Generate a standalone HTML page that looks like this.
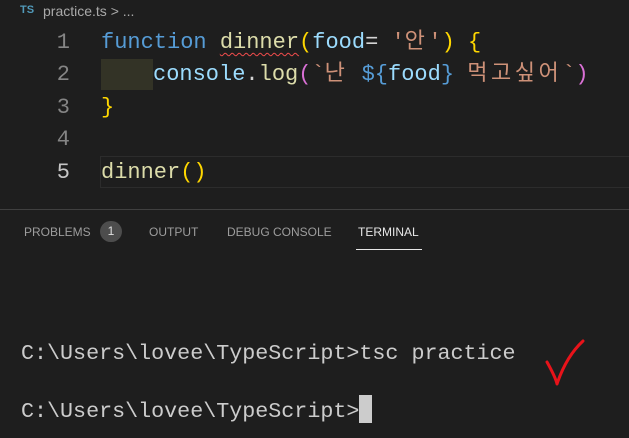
<!DOCTYPE html>
<html><head><meta charset="utf-8"><style>
body{margin:0;width:629px;height:438px;background:#1e1e1e;overflow:hidden;position:relative;font-family:"Liberation Sans",sans-serif}
.ab{position:absolute;white-space:pre}
.code{font-family:"Liberation Mono","Noto Sans CJK KR",monospace;font-size:22px;line-height:32px}
.k{letter-spacing:3.5px}
.ln{color:#858585;width:70px;text-align:right}
.kw{color:#569cd6}.fn{color:#dcdcaa}.pa{color:#9cdcfe}.st{color:#ce9178}.y{color:#ffd700}.p{color:#da70d6}.w{color:#d4d4d4}
.tab{font-size:12px;color:#9d9d9d;top:225px}
.term{font-family:"Liberation Mono",monospace;font-size:21.7px;color:#cccccc}
</style></head><body>
<div class="ab" style="left:20px;top:4px;font-size:11px;font-weight:bold;color:#519aba">TS</div>
<div class="ab" style="left:43px;top:3px;font-size:14px;color:#a9a9a9">practice.ts &gt; ...</div>

<div class="ab" style="left:101px;top:59px;width:52px;height:31px;background:#333326"></div>
<div class="ab" style="left:100px;top:156px;width:540px;height:30px;border:1px solid #2c2c2c"></div>

<div class="ab code ln" style="left:0;top:27px">1</div>
<div class="ab code ln" style="left:0;top:59px">2</div>
<div class="ab code ln" style="left:0;top:92px">3</div>
<div class="ab code ln" style="left:0;top:124px">4</div>
<div class="ab code ln" style="left:0;top:157px;color:#c6c6c6">5</div>

<div class="ab code" style="left:101px;top:27px"><span class="kw">function</span> <span class="fn" style="text-decoration:underline wavy #f14c4c;text-underline-offset:4px;text-decoration-thickness:1px">dinner</span><span class="y">(</span><span class="pa">food</span><span class="w">= </span><span class="st">'<span class="k">안</span>'</span><span class="y">)</span> <span class="y">{</span></div>
<div class="ab code" style="left:153px;top:59px"><span class="pa">console</span><span class="w">.</span><span class="fn">log</span><span class="p">(</span><span class="st">`<span class="k">난</span> </span><span class="kw">${</span><span class="pa">food</span><span class="kw">}</span><span class="st"> <span class="k">먹고싶어</span>`</span><span class="p">)</span></div>
<div class="ab code y" style="left:101px;top:92px">}</div>
<div class="ab code" style="left:101px;top:157px"><span class="fn">dinner</span><span class="y">()</span></div>

<div class="ab" style="left:0;top:209px;width:629px;height:1px;background:#404040"></div>
<div class="ab tab" style="left:24px">PROBLEMS</div>
<div class="ab" style="left:100px;top:221px;width:22px;height:21px;border-radius:11px;background:#4d4d4d;color:#e0e0e0;font-size:12px;text-align:center;line-height:21px">1</div>
<div class="ab tab" style="left:149px">OUTPUT</div>
<div class="ab tab" style="left:227px">DEBUG CONSOLE</div>
<div class="ab tab" style="left:358px;color:#e7e7e7">TERMINAL</div>
<div class="ab" style="left:356px;top:249px;width:66px;height:1px;background:#e7e7e7"></div>

<div class="ab term" style="left:21px;top:341px">C:\Users\lovee\TypeScript&gt;tsc practice</div>
<div class="ab term" style="left:21px;top:399px">C:\Users\lovee\TypeScript&gt;</div>
<div class="ab" style="left:359px;top:395px;width:13px;height:28px;background:#cccccc"></div>

<svg class="ab" style="left:540px;top:335px" width="50" height="55" viewBox="0 0 50 55"><path d="M7 27 C12 36 16 44 17 49 C22 34 30 18 43 6" stroke="#e8131a" stroke-width="3" fill="none" stroke-linecap="round" stroke-linejoin="round"/></svg>
</body></html>
